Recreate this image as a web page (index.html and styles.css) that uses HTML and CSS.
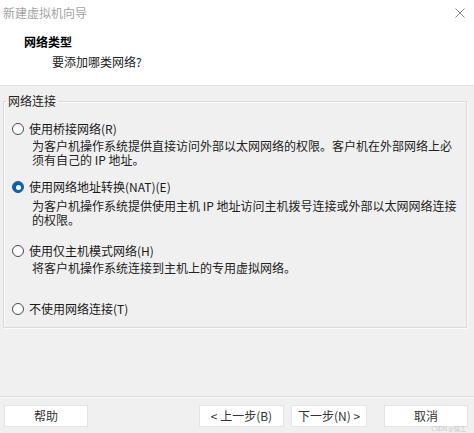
FILE: index.html
```html
<!DOCTYPE html>
<html lang="zh-CN">
<head>
<meta charset="utf-8">
<title>新建虚拟机向导</title>
<link rel="stylesheet" href="styles.css">
</head>
<body>
<div class="window">
  <div class="header">
    <div class="titlebar">
      <span class="title">新建虚拟机向导</span>
      <span class="close">
        <svg width="10" height="10" viewBox="0 0 10 10"><path d="M0.5 0.5 L9.5 9.5 M9.5 0.5 L0.5 9.5" stroke="#8a8a8a" stroke-width="1" fill="none"/></svg>
      </span>
    </div>
    <div class="heading">网络类型</div>
    <div class="subheading">要添加哪类网络?</div>
  </div>
  <div class="main">
    <fieldset class="group">
      <legend class="group-label">网络连接</legend>
      <div class="option opt1">
        <div class="opt-label"><span class="radio"></span>使用桥接网络(R)</div>
        <div class="opt-desc">为客户机操作系统提供直接访问外部以太网网络的权限。客户机在外部网络上必<br>须有自己的 IP 地址。</div>
      </div>
      <div class="option opt2">
        <div class="opt-label"><span class="radio checked"></span>使用网络地址转换(NAT)(E)</div>
        <div class="opt-desc desc-wide">为客户机操作系统提供使用主机 IP 地址访问主机拨号连接或外部以太网网络连接<br>的权限。</div>
      </div>
      <div class="option opt3">
        <div class="opt-label"><span class="radio"></span>使用仅主机模式网络(H)</div>
        <div class="opt-desc">将客户机操作系统连接到主机上的专用虚拟网络。</div>
      </div>
      <div class="option opt4">
        <div class="opt-label"><span class="radio"></span>不使用网络连接(T)</div>
      </div>
    </fieldset>
  </div>
  <div class="footer">
    <button class="btn btn-help">帮助</button>
    <div class="spacer"></div>
    <button class="btn btn-back">&lt; 上一步(B)</button>
    <button class="btn btn-next">下一步(N) &gt;</button>
    <button class="btn btn-cancel">取消</button>
  </div>
  <span class="watermark">CSDN @猿工</span>
</div>
</body>
</html>
```
FILE: styles.css
```css
* { box-sizing: border-box; }
html, body {
  margin: 0;
  padding: 0;
}
body {
  width: 474px;
  height: 433px;
  background: #f0f0f0;
  font-family: "Noto Sans CJK SC", "Noto Sans", sans-serif;
  font-size: 12px;
  color: #1a1a1a;
  overflow: hidden;
}
.window {
  width: 474px;
  height: 433px;
  display: flex;
  flex-direction: column;
  position: relative;
}
.header {
  height: 86px;
  background: #ffffff;
  border-bottom: 1px solid #e2e2e2;
  flex: none;
}
.titlebar {
  height: 26px;
  display: flex;
  align-items: center;
  justify-content: space-between;
  padding: 0 9px 0 3px;
}
.title {
  color: #a3a3a3;
  font-size: 12px;
  line-height: 16px;
}
.close {
  display: flex;
  width: 10px;
  height: 10px;
}
.heading {
  margin-top: 7px;
  padding-left: 24px;
  font-weight: bold;
  font-size: 12px;
  line-height: 18px;
  color: #000;
}
.subheading {
  margin-top: 2px;
  padding-left: 52px;
  font-size: 12px;
  line-height: 18px;
  color: #222;
}
.main {
  flex: none;
  height: 310px;
  padding: 6px 7px 0 3px;
}
.group {
  margin: 0;
  padding: 0;
  height: 236px;
  border: 1px solid #dadada;
  box-shadow: inset 1px 1px 0 #fafafa, 1px 1px 0 #fafafa;
}
.group-label {
  margin-left: 2px;
  padding: 0 2px;
  font-size: 12px;
  line-height: 18px;
  color: #222;
}
.option {
  padding-left: 8px;
}
.opt-label {
  display: flex;
  align-items: center;
  line-height: 18px;
  height: 18px;
  color: #1a1a1a;
}
.radio {
  width: 12px;
  height: 12px;
  border: 1px solid #4a4a4a;
  border-radius: 50%;
  background: #fdfdfd;
  margin-right: 5px;
  flex: none;
}
.radio.checked {
  background: #0f5fb3;
  border-color: #0f5fb3;
  display: flex;
  align-items: center;
  justify-content: center;
}
.radio.checked::after {
  content: "";
  width: 5px;
  height: 5px;
  border-radius: 50%;
  background: #ffffff;
}
.opt-desc {
  padding-left: 20px;
  line-height: 14px;
  margin-top: 1px;
  color: #222;
  white-space: nowrap;
}
.desc-wide {
  margin-top: 3px;
}
.opt1 { margin-top: 10px; }
.opt2 { margin-top: 11px; }
.opt3 { margin-top: 15px; }
.opt4 { margin-top: 25px; }
.footer {
  flex: none;
  height: 37px;
  border-top: 1px solid #dcdcdc;
  box-shadow: inset 0 1px 0 #fafafa;
  display: flex;
  align-items: flex-start;
  padding: 8px 6px 0 4px;
}
.spacer { flex: 1; }
.btn {
  height: 22px;
  background: #ffffff;
  border: 1px solid #e4e4e4;
  border-radius: 0;
  font-family: "Noto Sans CJK SC", "Noto Sans", sans-serif;
  font-size: 12px;
  line-height: 18px;
  color: #333;
  padding: 0;
}
.btn-help { width: 84px; }
.btn-back { width: 85px; }
.btn-next { width: 76px; margin-left: 7px; }
.btn-cancel { width: 84px; margin-left: 17px; }
.watermark {
  position: absolute;
  right: 8px;
  bottom: 1px;
  font-size: 6px;
  line-height: 7px;
  color: #c8c8c8;
}
```
